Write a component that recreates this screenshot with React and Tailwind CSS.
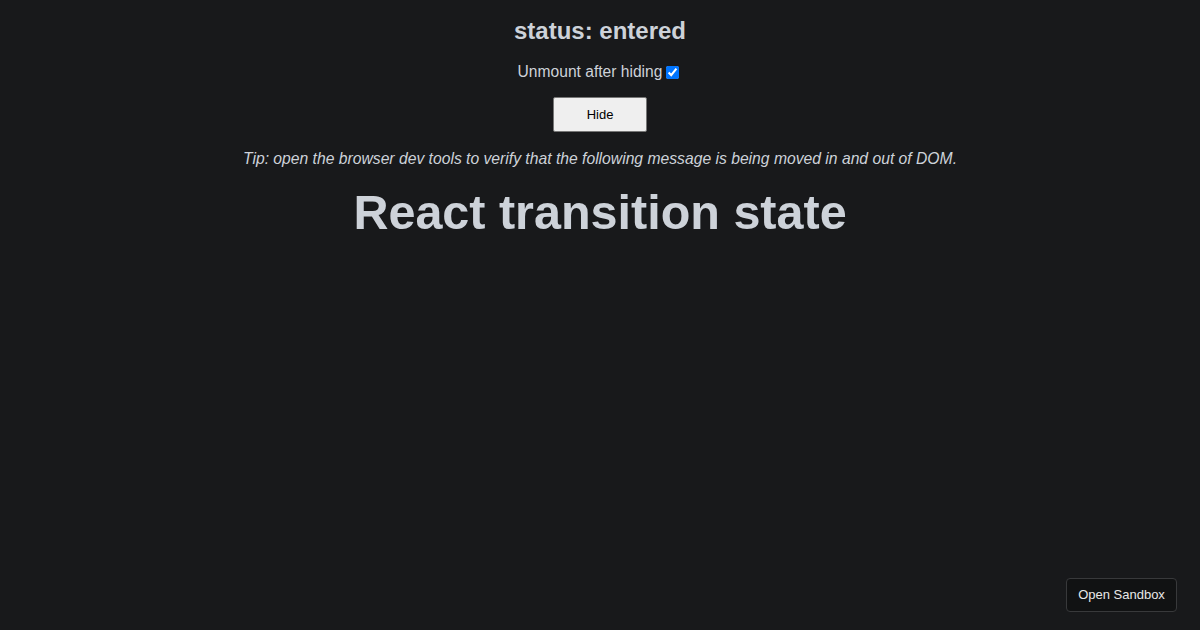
export default function App() {
  return (
    <div className="relative min-h-[630px] w-full bg-[#18191b] text-[#cdd2d9] font-['Liberation_Sans',Arial,sans-serif]">
      <div className="flex flex-col items-center pt-[17px] text-center">
        <h2 className="text-[24px] font-bold leading-[28px]">status: entered</h2>
        <label className="mt-[18px] flex items-center text-[15.6px] leading-[18px]">
          Unmount after hiding
          <input type="checkbox" defaultChecked className="ml-[4px] mr-[3px] h-[13px] w-[13px]" />
        </label>
        <button
          type="button"
          className="mt-[16px] h-[35px] w-[94px] rounded-[2px] border border-[#767676] bg-[#efefef] text-[13px] text-black"
        >
          Hide
        </button>
        <p className="mt-[18px] text-[15.7px] italic leading-[18px]">
          Tip: open the browser dev tools to verify that the following message is being moved in and out of DOM.
        </p>
        <h1 className="mt-[14px] text-[48.5px] font-bold leading-[60px]">React transition state</h1>
      </div>
      <button
        type="button"
        className="absolute bottom-[18px] right-[23px] h-[34px] w-[111px] rounded-[4px] border border-[#38393b] bg-[#111213] text-[13px] text-[#e8e8e8]"
      >
        Open Sandbox
      </button>
    </div>
  );
}
